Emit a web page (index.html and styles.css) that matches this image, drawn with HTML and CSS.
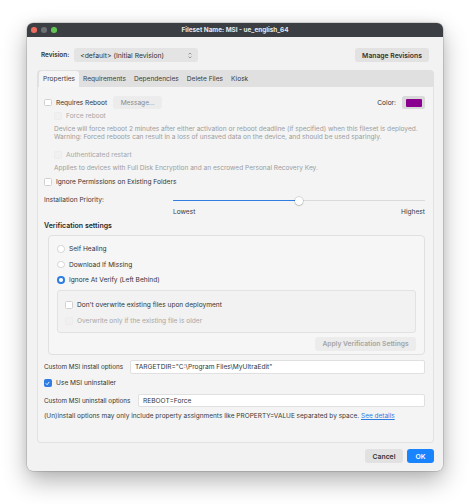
FILE: index.html
```html
<!DOCTYPE html>
<html>
<head>
<meta charset="utf-8">
<link rel="stylesheet" href="styles.css">
</head>
<body>
<div class="window">
  <div class="titlebar">
    <div class="lights"><span class="light red"></span><span class="light grey"></span><span class="light green"></span></div>
    <div class="title">Fileset Name: MSI - ue_english_64</div>
  </div>
  <div class="body">
    <div class="revrow">
      <span class="bold revlabel">Revision:</span>
      <div class="select"><span>&lt;default&gt; (Initial Revision)</span>
        <svg class="updown" width="4" height="7" viewBox="0 0 4 7"><path d="M0.6 2.4 L2 1 L3.4 2.4 M0.6 4.6 L2 6 L3.4 4.6" fill="none" stroke="#777" stroke-width="0.7"/></svg>
      </div>
      <div class="spacer"></div>
      <div class="btn bold manage">Manage Revisions</div>
    </div>
    <div class="tabs">
      <div class="tab active">Properties</div>
      <div class="tab">Requirements</div>
      <div class="tab">Dependencies</div>
      <div class="tab">Delete Files</div>
      <div class="tab">Kiosk</div>
    </div>
    <div class="panel">
      <div class="row r1">
        <span class="cb"></span><span class="lbl">Requires Reboot</span>
        <div class="btn msg">Message...</div>
        <div class="spacer"></div>
        <span class="lbl">Color:</span>
        <div class="swatch"><div class="swatch-in"></div></div>
      </div>
      <div class="row sub r2"><span class="cb dis"></span><span class="lbl dim">Force reboot</span></div>
      <div class="desc r3">Device will force reboot 2 minutes after either activation or reboot deadline (if specified) when this fileset is deployed.<br>Warning: Forced reboots can result in a loss of unsaved data on the device, and should be used sparingly.</div>
      <div class="row sub r4"><span class="cb dis"></span><span class="lbl dim">Authenticated restart</span></div>
      <div class="desc r5">Applies to devices with Full Disk Encryption and an escrowed Personal Recovery Key.</div>
      <div class="row r6"><span class="cb"></span><span class="lbl">Ignore Permissions on Existing Folders</span></div>
      <div class="prio">
        <span class="plabel">Installation Priority:</span>
        <div class="slider">
          <div class="track"><div class="fill" style="width:50%"></div><div class="thumb" style="left:50%"></div></div>
          <div class="ends"><span>Lowest</span><span>Highest</span></div>
        </div>
      </div>
      <div class="section bold">Verification settings</div>
      <div class="group">
        <div class="row radio-row"><span class="rb"></span><span class="lbl">Self Healing</span></div>
        <div class="row radio-row"><span class="rb"></span><span class="lbl">Download If Missing</span></div>
        <div class="row radio-row"><span class="rb on"></span><span class="lbl">Ignore At Verify (Left Behind)</span></div>
        <div class="inner">
          <div class="row"><span class="cb"></span><span class="lbl">Don't overwrite existing files upon deployment</span></div>
          <div class="row"><span class="cb dis"></span><span class="lbl dim">Overwrite only if the existing file is older</span></div>
        </div>
        <div class="applyrow"><div class="btn apply">Apply Verification Settings</div></div>
      </div>
      <div class="field f1"><span class="flabel">Custom MSI install options</span><div class="input">TARGETDIR="C:\Program Files\MyUltraEdit"</div></div>
      <div class="row r7"><span class="cb checked"><svg width="5" height="5" viewBox="0 0 5 5"><path d="M1 2.6 L2.1 3.7 L4 1.2" fill="none" stroke="#fff" stroke-width="0.9" stroke-linecap="round" stroke-linejoin="round"/></svg></span><span class="lbl">Use MSI uninstaller</span></div>
      <div class="field f2"><span class="flabel">Custom MSI uninstall options</span><div class="input">REBOOT=Force</div></div>
      <div class="note">(Un)install options may only include property assignments like PROPERTY=VALUE separated by space. <a class="link">See details</a></div>
    </div>
    <div class="footer">
      <div class="btn cancel bold">Cancel</div>
      <div class="btn ok bold">OK</div>
    </div>
  </div>
</div>
</body>
</html>
```
FILE: styles.css
```css
* { box-sizing: border-box; }
html, body { margin: 0; padding: 0; background: #ffffff; }
body {
  font-family: Inter, "Noto Sans", "DejaVu Sans", sans-serif;
  font-size: 6.6px;
  color: #333333;
  width: 474px; height: 504px; overflow: hidden;
  padding: 23px 0 0 27px;
}
.bold { font-weight: 600; }
.spacer { flex: 1; }
.window {
  width: 416px; height: 448px;
  border-radius: 6px;
  background: #f2f2f2;
  box-shadow: 0 0 0 0.5px rgba(0,0,0,0.22), 0 10px 24px rgba(0,0,0,0.3), 0 0 8px rgba(0,0,0,0.08);
  overflow: hidden;
  display: flex; flex-direction: column;
}
.titlebar {
  height: 14px; background: #3b3e43;
  display: flex; align-items: center;
  position: relative;
}
.lights { display: flex; gap: 4.5px; padding-left: 4px; }
.light { width: 5.5px; height: 5.5px; border-radius: 50%; display: block; }
.red { background: #ed6a5e; }
.grey { background: #6c6f74; }
.green { background: #61c554; }
.title {
  position: absolute; left: 0; right: 0; top: 0; height: 14px;
  line-height: 14px; text-align: center;
  color: #e8e8e8; font-weight: 700; font-size: 6.4px;
}
.body { flex: 1; display: flex; flex-direction: column; padding: 11px 9px 8px 10px; }
.revrow { display: flex; align-items: center; height: 14px; padding-left: 4px; }
.revlabel { font-size: 6.4px; }
.select {
  margin-left: 5px; width: 124px; height: 14px; background: #e4e4e4; border-radius: 3px;
  display: flex; align-items: center; justify-content: space-between; padding: 0 6px 0 6px; color: #333;
  font-size: 6.8px;
}
.btn {
  height: 14px; display: flex; align-items: center; justify-content: center;
  background: #e2e2e2; border-radius: 3px; color: #333; white-space: nowrap;
}
.manage { width: 74px; margin-right: 5px; font-size: 6.8px; }
.tabs {
  margin-top: 8px; height: 17px; background: #e0e0e0; border-radius: 4px 4px 0 0;
  display: flex; align-items: stretch; padding-left: 2px; padding-top: 1px;
  font-size: 6.6px;
}
.tab { padding: 0 4px; display: flex; align-items: center; color: #3a3a3a; }
.tab.active { background: #f5f5f5; border-radius: 3px 3px 0 0; }
.panel {
  flex: 1; background: #f4f4f4; border: 0.5px solid #e2e2e2; border-top: none;
  border-radius: 0 0 4px 4px;
  padding: 9px 8px 0 6px;
  display: flex; flex-direction: column;
}
.row { display: flex; align-items: center; height: 10px; }
.cb {
  width: 7.5px; height: 7.5px; border-radius: 1.5px; background: #fff;
  border: 0.5px solid #d0d0d0; margin: 0 4.5px 0 0; flex: none;
  display: flex; align-items: center; justify-content: center;
}
.cb.dis { background: #f0f0f0; border-color: #ececec; }
.cb.checked { background: #2f7de1; border-color: #2f7de1; }
.lbl { white-space: nowrap; }
.dim { color: #a6a6a6; }
.r1 { height: 13px; }
.r1 .msg { width: 49px; height: 13px; margin-left: 6px; background: #ececec; color: #8a8a8a; }
.swatch { width: 23px; height: 13px; background: #d9d9d9; border-radius: 2.5px; padding: 2.5px 3.5px; margin-left: 6px; }
.swatch-in { width: 100%; height: 100%; background: #8a0190; border-radius: 1px; }
.sub { padding-left: 10px; }
.r2 { margin-top: 2px; }
.desc { color: #9c9c9c; line-height: 8px; padding-left: 10px; white-space: nowrap; font-size: 6.55px; }
.r3 { margin-top: 4px; }
.r4 { margin-top: 9px; }
.r5 { margin-top: 4px; }
.r6 { margin-top: 5px; }
.prio { margin-top: 9px; display: flex; }
.plabel { width: 129px; height: 9px; line-height: 9px; color: #3a3a3a; font-size: 6.6px; }
.slider { flex: 1; }
.track { position: relative; height: 9px; }
.track::before { content: ""; position: absolute; left: 0; right: 0; top: 4px; height: 1.2px; background: #dadada; border-radius: 1px; }
.fill { position: absolute; left: 0; top: 4px; height: 1.2px; background: #2f7de1; border-radius: 1px; }
.thumb { position: absolute; top: 0.5px; width: 8px; height: 8px; margin-left: -4px; border-radius: 50%; background: #fff; box-shadow: 0 0 0 0.5px rgba(0,0,0,0.18), 0 0.5px 1.5px rgba(0,0,0,0.25); }
.ends { display: flex; justify-content: space-between; height: 8px; line-height: 8px; margin-top: 3px; color: #3a3a3a; }
.section { margin-top: 5px; height: 10px; line-height: 10px; font-size: 7px; color: #2a2a2a; }
.group {
  margin-top: 4px; margin-left: 4px; height: 120px;
  border: 0.5px solid #e0e0e0; border-radius: 4px; background: #f6f6f6;
  padding: 8px 8px 3px 8px; display: flex; flex-direction: column;
}
.radio-row { margin-bottom: 6px; }
.radio-row:nth-child(3) { margin-bottom: 0; }
.rb {
  width: 7.5px; height: 7.5px; border-radius: 50%; background: #fff; border: 0.5px solid #d4d4d4;
  margin-right: 4.5px; flex: none;
}
.rb.on { border: 2px solid #2f7de1; background: #fff; }
.inner {
  margin-top: 5px; height: 44px; border: 0.5px solid #e2e2e2; border-radius: 3px; background: #f2f2f2;
  padding: 9px 7px 0 7px; display: flex; flex-direction: column; gap: 6px;
}
.applyrow { display: flex; justify-content: flex-end; margin-top: 4px; }
.btn.apply { width: 101px; background: #ececec; color: #a4a4a4; font-weight: 600; font-size: 6.7px; }
.field { display: flex; align-items: center; height: 14px; }
.f1 { margin-top: 5px; }
.f2 { margin-top: 6px; height: 13px; }
.flabel { white-space: nowrap; color: #333; font-size: 6.3px; flex: none; }
.f1 .flabel { width: 86px; }
.f2 .flabel { width: 94px; }
.input { flex: 1; height: 100%; background: #fff; border: 0.5px solid #e0e0e0; border-radius: 2px; display: flex; align-items: center; padding-left: 4px; color: #333; }
.r7 { margin-top: 4px; }
.note { margin-top: 5px; height: 8px; line-height: 8px; color: #3a3a3a; white-space: nowrap; font-size: 6.5px; }
.link { color: #2f7de1; text-decoration: underline; }
.footer { display: flex; justify-content: flex-end; gap: 4px; margin-top: 6px; }
.cancel { width: 38px; background: #e1e1e1; font-size: 6.8px; }
.ok { width: 27px; background: #1a84ff; color: #fff; font-size: 6.8px; }
```
